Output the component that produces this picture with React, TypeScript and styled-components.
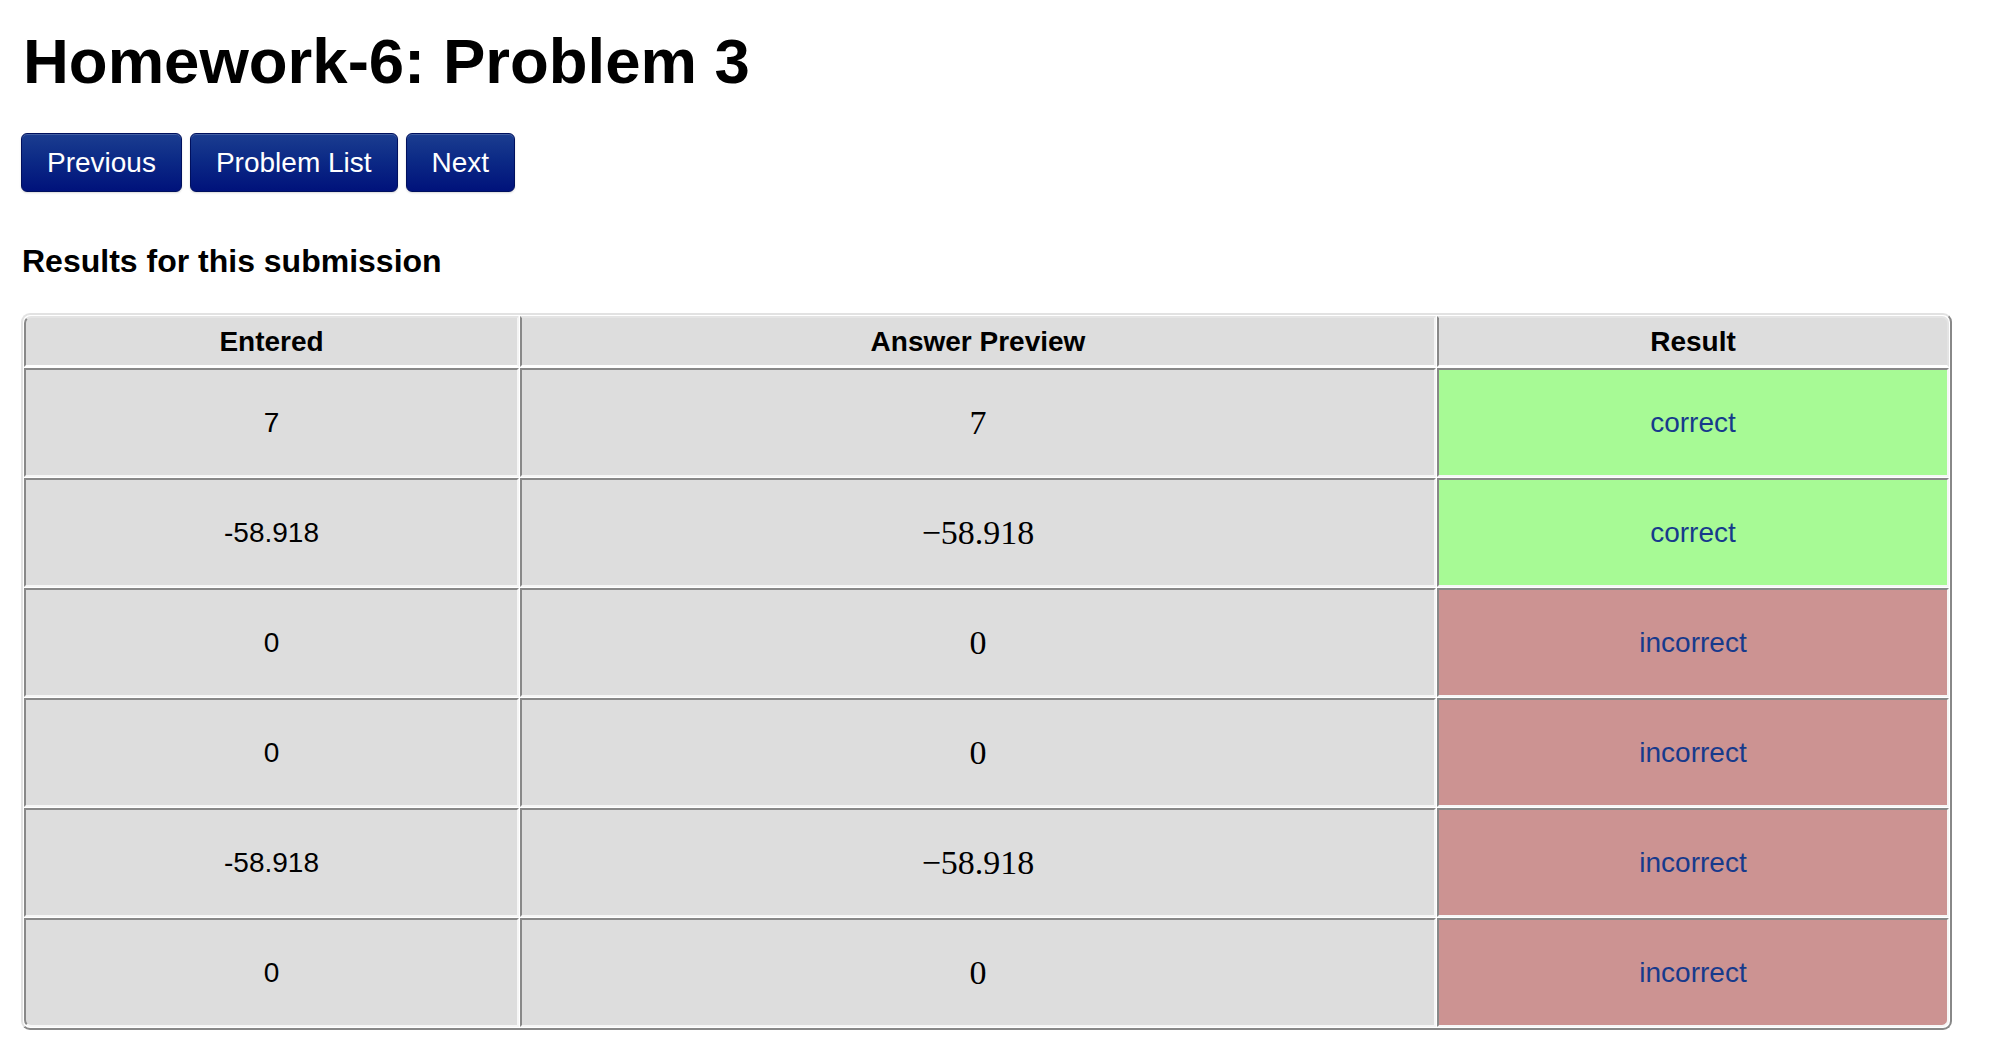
import React from 'react';
import styled, { createGlobalStyle } from 'styled-components';

const GlobalStyle = createGlobalStyle`
  html, body {
    margin: 0;
    padding: 0;
    background: #ffffff;
  }
  body {
    font-family: "Liberation Sans", Arial, Helvetica, sans-serif;
    color: #000000;
  }
`;

const Page = styled.div`
  padding: 24px 21px 0 21px;
  width: 1931px;
`;

const Title = styled.h1`
  margin: 0;
  font-size: 63.5px;
  line-height: 74px;
  font-weight: 700;
  padding-left: 2px;
`;

const NavBar = styled.div`
  display: flex;
  gap: 8px;
  margin-top: 35px;
`;

const NavButton = styled.button`
  height: 59px;
  padding: 0 25px;
  font-family: "Liberation Sans", Arial, sans-serif;
  font-size: 28px;
  color: #ffffff;
  border: 1px solid #00105e;
  border-radius: 6px;
  background: linear-gradient(to bottom, #1b3d90 0%, #0c2a86 45%, #00127b 100%);
  box-shadow: inset 0 1px 0 rgba(255, 255, 255, 0.18), 0 1px 2px rgba(0, 0, 0, 0.15);
  cursor: pointer;
`;

const SectionTitle = styled.h3`
  margin: 51px 0 0 1px;
  font-size: 32px;
  line-height: 37px;
  font-weight: 700;
`;

const ResultsTable = styled.table`
  margin-top: 33px;
  width: 1931px;
  table-layout: fixed;
  border-collapse: separate;
  border-spacing: 1px;
  border: 2px solid;
  border-color: #e2e2e2 #888888 #888888 #e2e2e2;
  border-radius: 9px;
`;

const HeadRow = styled.tr`
  height: 51px;
`;

const BodyRow = styled.tr`
  height: 109px;
`;

const HeadCell = styled.th`
  background: #dddddd;
  font-size: 28px;
  font-weight: 700;
  text-align: center;
  vertical-align: middle;
  padding: 0;
  border: 2px solid;
  border-color: #e4e4e4 #f4f4f4 #ffffff #888888;

  &:first-child {
    border-top-left-radius: 7px;
  }
  &:last-child {
    border-top-right-radius: 7px;
    border-right-color: #e4e4e4;
  }
`;

type Kind = 'plain' | 'preview' | 'correct' | 'incorrect';

const fills: Record<Kind, string> = {
  plain: '#dddddd',
  preview: '#dddddd',
  correct: '#a7fa95',
  incorrect: '#cc9392',
};

const Cell = styled.td<{ $kind: Kind }>`
  background: ${(p) => fills[p.$kind]};
  text-align: center;
  vertical-align: middle;
  padding: 0;
  border: 2px solid;
  border-color: #888888 #f6f6f6 #f6f6f6 #888888;
  font-family: ${(p) =>
    p.$kind === 'preview'
      ? '"Liberation Serif", "Times New Roman", serif'
      : '"Liberation Sans", Arial, sans-serif'};
  font-size: ${(p) => (p.$kind === 'preview' ? '34px' : '28px')};
  color: ${(p) => (p.$kind === 'correct' || p.$kind === 'incorrect' ? '#173a8c' : '#000000')};

  tr:last-child > &:first-child {
    border-bottom-left-radius: 7px;
  }
  tr:last-child > &:last-child {
    border-bottom-right-radius: 7px;
  }
`;

interface Answer {
  entered: string;
  preview: string;
  ok: boolean;
}

const answers: Answer[] = [
  { entered: '7', preview: '7', ok: true },
  { entered: '-58.918', preview: '\u221258.918', ok: true },
  { entered: '0', preview: '0', ok: false },
  { entered: '0', preview: '0', ok: false },
  { entered: '-58.918', preview: '\u221258.918', ok: false },
  { entered: '0', preview: '0', ok: false },
];

const App = () => {
  return (
    <>
      <GlobalStyle />
      <Page>
        <Title>Homework-6: Problem 3</Title>
        <NavBar>
          <NavButton>Previous</NavButton>
          <NavButton>Problem List</NavButton>
          <NavButton>Next</NavButton>
        </NavBar>
        <SectionTitle>Results for this submission</SectionTitle>
        <ResultsTable>
          <colgroup>
            <col style={{ width: 495 }} />
            <col style={{ width: 916 }} />
            <col />
          </colgroup>
          <thead>
            <HeadRow>
              <HeadCell>Entered</HeadCell>
              <HeadCell>Answer Preview</HeadCell>
              <HeadCell>Result</HeadCell>
            </HeadRow>
          </thead>
          <tbody>
            {answers.map((a, i) => (
              <BodyRow key={i}>
                <Cell $kind="plain">{a.entered}</Cell>
                <Cell $kind="preview">{a.preview}</Cell>
                <Cell $kind={a.ok ? 'correct' : 'incorrect'}>{a.ok ? 'correct' : 'incorrect'}</Cell>
              </BodyRow>
            ))}
          </tbody>
        </ResultsTable>
      </Page>
    </>
  );
};

export default App;
